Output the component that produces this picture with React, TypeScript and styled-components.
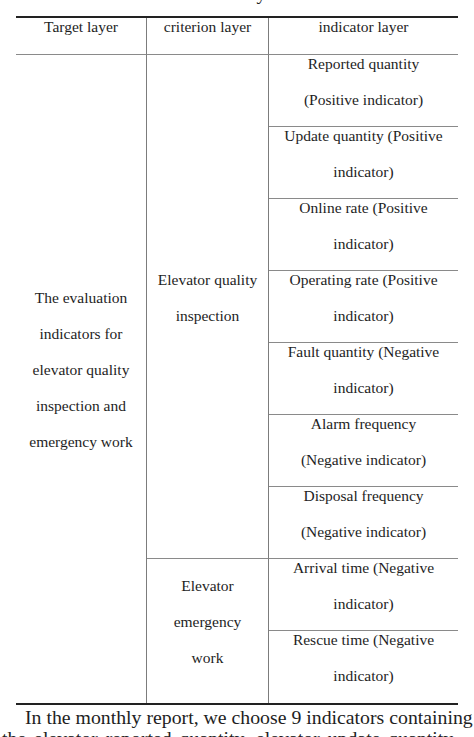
import React from "react";
import styled, { createGlobalStyle } from "styled-components";

const Global = createGlobalStyle`
  html, body { margin: 0; padding: 0; background: #ffffff; }
  body {
    font-family: "Liberation Serif", "Times New Roman", serif;
    color: #1e1e1e;
    overflow: hidden;
  }
`;

const Page = styled.div`
  width: 474px;
  height: 737px;
  overflow: hidden;
  background: #ffffff;
`;

const Caption = styled.div`
  font-size: 19px;
  line-height: 19px;
  margin: -16px 0 13px 60px;
  white-space: nowrap;
`;

const Table = styled.div`
  margin-left: 16px;
  width: 442px;
  display: grid;
  grid-template-columns: 131px 122px 189px;
  grid-template-rows: 37px repeat(9, 72px);
  border-top: 2px solid #222222;
  border-bottom: 2px solid #222222;
`;

const Cell = styled.div<{
  $col: number;
  $row: number;
  $span?: number;
  $right?: boolean;
  $bottom?: boolean;
}>`
  grid-column: ${(p) => p.$col};
  grid-row: ${(p) => p.$row} / span ${(p) => p.$span ?? 1};
  display: flex;
  flex-direction: column;
  align-items: center;
  justify-content: center;
  border-right: ${(p) => (p.$right ? "1px solid #7c7c7c" : "none")};
  border-bottom: ${(p) => (p.$bottom ? "1px solid #8a8a8a" : "none")};
  font-size: 15.5px;
  line-height: 36px;
  text-align: center;
`;

const CellText = styled.div`
  margin-top: -18px;
  white-space: nowrap;
`;

const Para = styled.div`
  margin-top: 2px;
  font-size: 19.8px;
  line-height: 21px;
  white-space: nowrap;
`;

const ParaLine = styled.div<{ $indent: number; $spacing?: number }>`
  padding-left: ${(p) => p.$indent}px;
  word-spacing: ${(p) => p.$spacing ?? 0}px;
`;

type CellDef = {
  col: number;
  row: number;
  span?: number;
  right?: boolean;
  bottom?: boolean;
  lines: string[];
};

const indicators: string[][] = [
  ["Reported quantity", "(Positive indicator)"],
  ["Update quantity (Positive", "indicator)"],
  ["Online rate (Positive", "indicator)"],
  ["Operating rate (Positive", "indicator)"],
  ["Fault quantity (Negative", "indicator)"],
  ["Alarm frequency", "(Negative indicator)"],
  ["Disposal frequency", "(Negative indicator)"],
  ["Arrival time (Negative", "indicator)"],
  ["Rescue time (Negative", "indicator)"],
];

const cells: CellDef[] = [
  { col: 1, row: 1, right: true, bottom: true, lines: ["Target layer"] },
  { col: 2, row: 1, right: true, bottom: true, lines: ["criterion layer"] },
  { col: 3, row: 1, bottom: true, lines: ["indicator layer"] },
  {
    col: 1,
    row: 2,
    span: 9,
    right: true,
    lines: [
      "The evaluation",
      "indicators for",
      "elevator quality",
      "inspection and",
      "emergency work",
    ],
  },
  {
    col: 2,
    row: 2,
    span: 7,
    right: true,
    bottom: true,
    lines: ["Elevator quality", "inspection"],
  },
  {
    col: 2,
    row: 9,
    span: 2,
    right: true,
    lines: ["Elevator", "emergency", "work"],
  },
  ...indicators.map((lines, i) => ({
    col: 3,
    row: i + 2,
    bottom: i < indicators.length - 1,
    lines,
  })),
];

export default function App() {
  return (
    <>
      <Global />
      <Page>
        <Caption>Table 1 Indicator hierarchy</Caption>
        <Table>
          {cells.map((c, i) => (
            <Cell
              key={i}
              $col={c.col}
              $row={c.row}
              $span={c.span}
              $right={c.right}
              $bottom={c.bottom}
            >
              <CellText>
                {c.lines.map((l, j) => (
                  <div key={j}>{l}</div>
                ))}
              </CellText>
            </Cell>
          ))}
        </Table>
        <Para>
          <ParaLine $indent={25}>
            In the monthly report, we choose 9 indicators containing
          </ParaLine>
          <ParaLine $indent={2} $spacing={3}>
            the elevator reported quantity, elevator update quantity,
          </ParaLine>
        </Para>
      </Page>
    </>
  );
}
